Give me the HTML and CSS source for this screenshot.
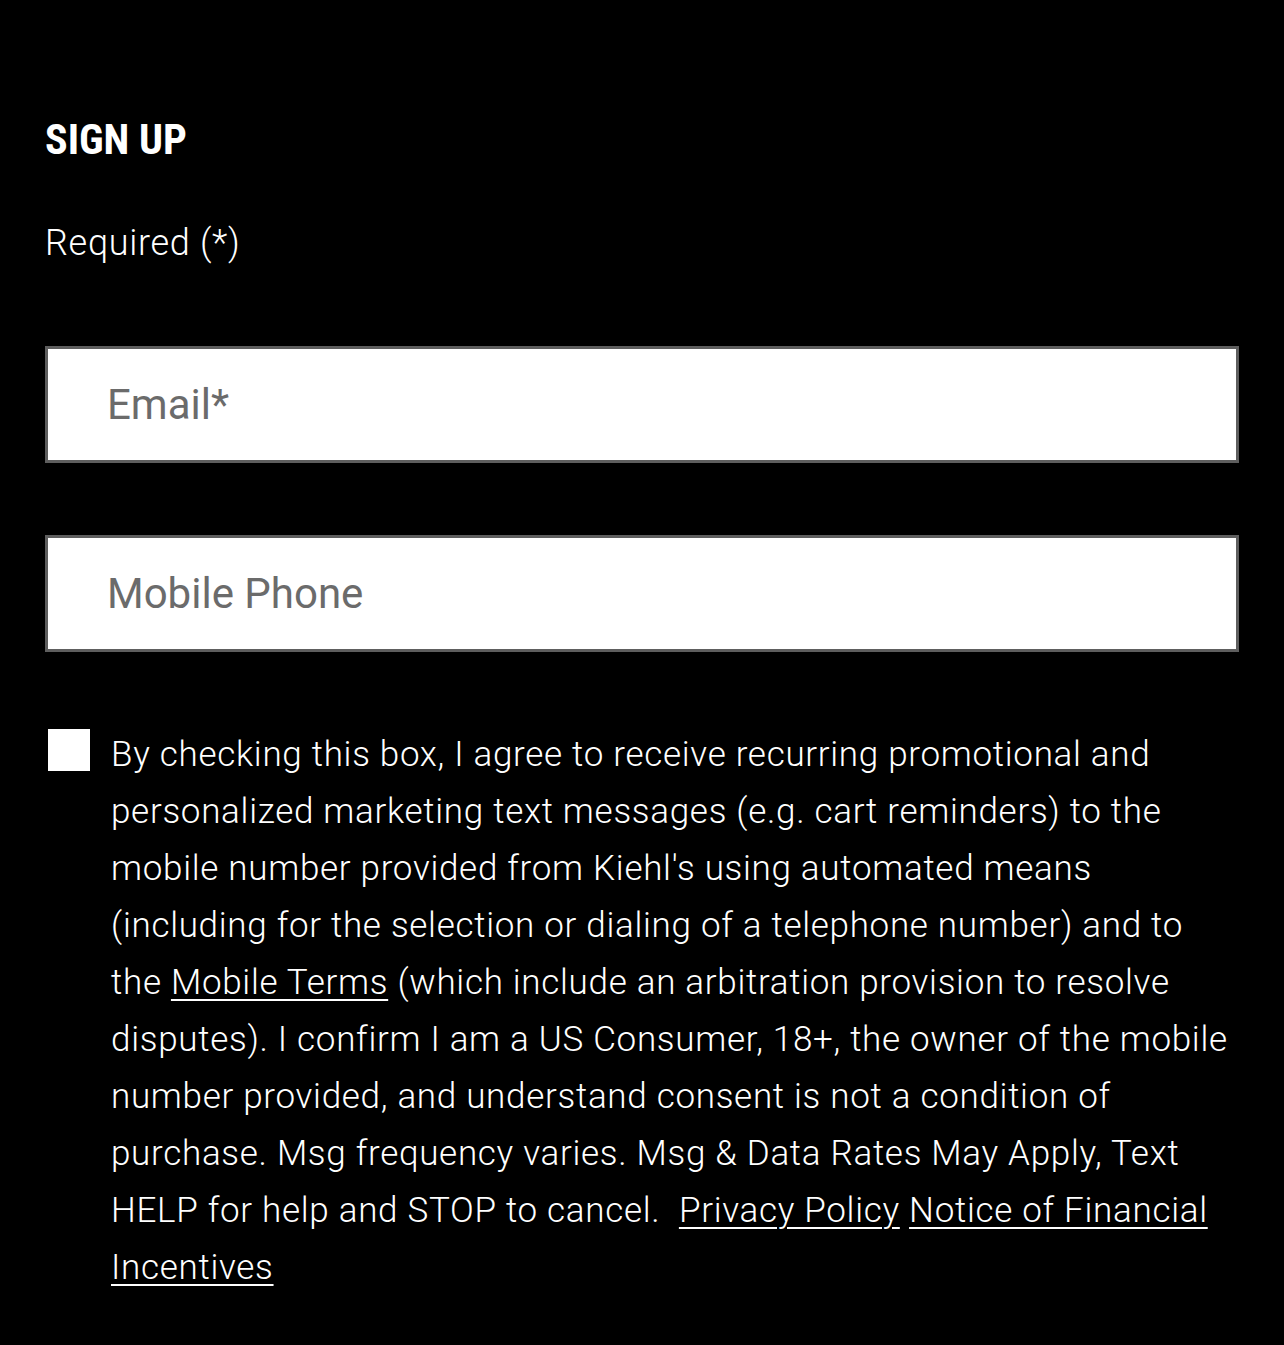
FILE: index.html
```html
<!DOCTYPE html>
<html lang="en">
<head>
<meta charset="utf-8">
<title>Sign Up</title>
<link rel="stylesheet" href="styles.css">
</head>
<body>
<main class="signup">
  <h2 class="signup-title">SIGN UP</h2>
  <p class="required">Required (*)</p>
  <form class="signup-form">
    <input class="field" type="email" placeholder="Email*">
    <input class="field" type="tel" placeholder="Mobile Phone">
    <label class="consent">
      <span class="checkbox"></span>
      <span class="consent-text">By checking this box, I agree to receive recurring promotional and personalized marketing text messages (e.g. cart reminders) to the mobile number provided from Kiehl's using automated means (including for the selection or dialing of a telephone number) and to the <a href="#" class="link">Mobile Terms</a> (which include an arbitration provision to resolve disputes). I confirm I am a US Consumer, 18+, the owner of the mobile number provided, and understand consent is not a condition of purchase. Msg frequency varies. Msg &amp; Data Rates May Apply, Text HELP for help and STOP to cancel.&nbsp; <a href="#" class="link">Privacy Policy</a> <a href="#" class="link">Notice of Financial Incentives</a></span>
    </label>
  </form>
</main>
</body>
</html>
```
FILE: styles.css
```css
html, body {
  margin: 0;
  padding: 0;
  background: #000;
}

body {
  font-family: Roboto, "Noto Sans", sans-serif;
  color: #fff;
}

.signup {
  padding: 116px 45px 40px 45px;
}

.signup-title {
  margin: 0;
  font-family: "Roboto Condensed", "Liberation Sans Narrow", "DejaVu Sans Condensed", sans-serif;
  font-stretch: condensed;
  font-weight: 700;
  font-size: 42px;
  line-height: 48px;
}

.required {
  margin: 59px 0 0 0;
  font-size: 36px;
  font-weight: 300;
  letter-spacing: 0.7px;
  line-height: 40px;
}

.signup-form {
  margin-top: 83px;
  display: flex;
  flex-direction: column;
}

.field {
  box-sizing: border-box;
  width: 100%;
  height: 117px;
  margin: 0;
  border: 3px solid #5e5e5e;
  border-radius: 0;
  background: #fff;
  padding: 0 20px 0 59px;
  font-family: Roboto, "Noto Sans", sans-serif;
  font-size: 42px;
  color: #333;
  outline: none;
}

.field::placeholder {
  color: #6b6b6b;
  opacity: 1;
}

.field + .field {
  margin-top: 72px;
}

.consent {
  margin-top: 74px;
  display: flex;
  align-items: flex-start;
  gap: 21px;
}

.checkbox {
  flex: 0 0 auto;
  width: 42px;
  height: 42px;
  margin: 3px 0 0 3px;
  background: #fff;
}

.consent-text {
  flex: 1;
  font-size: 35px;
  font-weight: 300;
  letter-spacing: 0.7px;
  line-height: 57px;
}

.link {
  color: #fff;
  text-decoration: underline;
  text-decoration-thickness: 2px;
  text-underline-offset: 5px;
}
```
